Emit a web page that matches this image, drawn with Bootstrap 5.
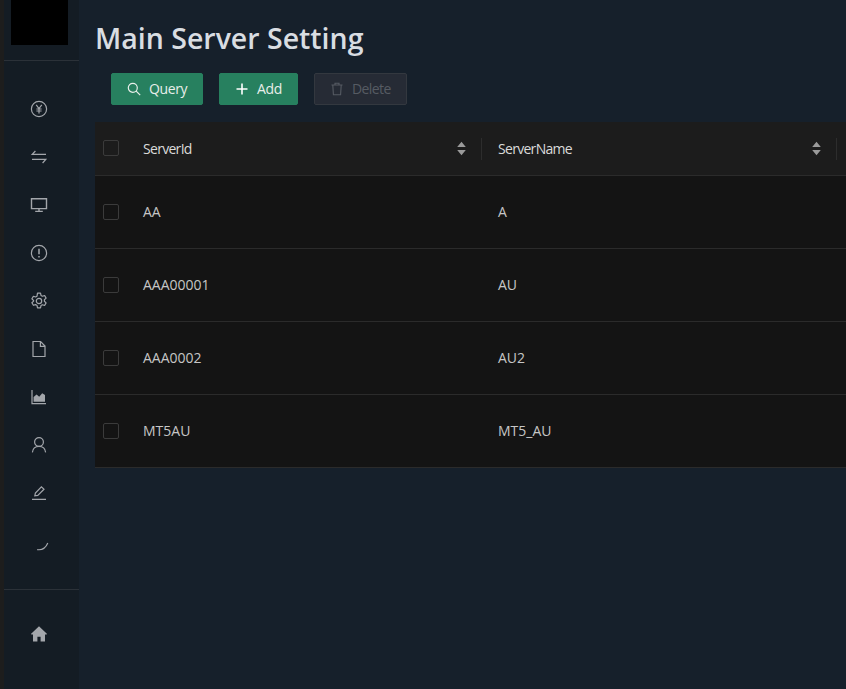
<!DOCTYPE html>
<html lang="en">
<head>
<meta charset="utf-8">
<title>Main Server Setting</title>
<link rel="stylesheet" href="https://cdn.jsdelivr.net/npm/bootstrap@5.3.0/dist/css/bootstrap.min.css">
<style>
html,body{height:100%;margin:0;overflow:hidden;background:#16202b;font-family:"Open Sans","Noto Sans",sans-serif;}
.shell{height:689px;width:846px;overflow:hidden;}
.edge{width:4px;background:#1d1d1d;flex:none;}
.side{width:75px;flex:none;background:#141c24;color:#a3a6ab;}
.logo-wrap{height:61px;border-bottom:1px solid #2b3138;padding:0 0 16px 7px;}
.logo-box{width:57px;height:45px;background:#000;}
.side-list{padding-top:24px;height:529px;border-bottom:1px solid #2b3138;}
.side-item{height:48px;display:flex;align-items:center;justify-content:center;padding-right:5px;}
.side-item svg{width:18px;height:18px;fill:none;stroke:#a3a6ab;stroke-width:1.2;overflow:visible;}
.side-home{height:88px;padding:27px 5px 0 0;display:flex;justify-content:center;}
.side-home svg{width:18px;height:18px;margin-top:9px;fill:#a3a6ab;}
.main-pane{flex:1 1 auto;min-width:0;padding:0 0 0 16px;overflow:hidden;}
.page-title{font-size:28.5px;font-weight:600;color:#d9dde2;line-height:38px;margin:0;padding-top:19px;height:73px;}
.tools{padding-left:16px;gap:16px;height:49px;}
.tool-btn{height:32px;border-radius:2px;font-size:14px;letter-spacing:-.4px;line-height:20px;padding:0 15px;display:inline-flex;align-items:center;gap:8px;border:1px solid #27805f;background:#27805f;color:#e8eeea;}
.tool-btn:hover{background:#27805f;border-color:#27805f;color:#e8eeea;}
.tool-btn.off,.tool-btn:disabled{background:#262b35;border-color:#33383f;color:#565b63;opacity:1;letter-spacing:-.55px;}
.tool-btn svg{width:14px;height:14px;}
.grid-wrap{width:760px;overflow:hidden;}
.srv-grid{width:900px;table-layout:fixed;border-collapse:separate;border-spacing:0;margin:0;font-size:14px;--bs-table-bg:transparent;--bs-table-color:#c6c6c6;}
.srv-grid th,.srv-grid td{border-bottom:1px solid #2b2b2b;padding:0 16px;vertical-align:middle;background:#141414;color:#c6c6c6;font-weight:400;position:relative;}
.srv-grid th{background:#1c1c1c;height:54px;color:#dadada;letter-spacing:-.7px;}
.srv-grid td{height:73px;padding-bottom:2px;}
.srv-grid .chk-col{width:32px;padding:0 8px;}
.srv-grid .data-col{width:355px;}
.tick{display:block;width:16px;height:16px;border:1px solid #3b3b3b;border-radius:2px;background:transparent;}
th .tick{margin-bottom:2px;}
.col-divider::after{content:"";position:absolute;right:0;top:16px;height:22px;width:1px;background:#2d2d2d;}
.sorter{position:absolute;right:16px;top:19px;width:9px;height:15px;}
</style>
</head>
<body>
<div class="shell d-flex">
  <div class="edge"></div>
  <nav class="side d-flex flex-column">
    <div class="logo-wrap"><div class="logo-box"></div></div>
    <div class="side-list">
      <div class="side-item"><svg viewBox="0 0 18 18"><circle cx="9" cy="9" r="7.6"/><path d="M6.200 4.800 9 8.600l2.800-3.800M9 8.600v4.800M6.400 9h5.200M6.400 11h5.200"/></svg></div>
      <div class="side-item"><svg viewBox="0 0 18 18"><path d="M5.400 3 2.200 6.400h13.800M2 11.400h13.800L12.600 15"/></svg></div>
      <div class="side-item"><svg viewBox="0 0 18 18"><path d="M1.500 2.800h15v9.800h-15zM9 12.600v2.600M5.200 15.400h7.600" stroke-width="1.400"/></svg></div>
      <div class="side-item"><svg viewBox="0 0 18 18"><circle cx="9" cy="9" r="7.600"/><path d="M9 4.800v5.400M9 12v1.400" stroke-width="1.500"/></svg></div>
      <div class="side-item"><svg viewBox="0 0 18 18"><path d="M7.500 1.200h3l.5 2.200 1.400.8 2.200-.7 1.500 2.600-1.700 1.600v1.600l1.700 1.600-1.500 2.600-2.200-.7-1.400.8-.5 2.200h-3L7 13.400l-1.400-.8-2.200.7-1.500-2.600 1.700-1.600V8.500L1.900 6.900l1.500-2.600 2.200.7L7 4.200z" stroke-linejoin="round"/><circle cx="9" cy="9" r="2.700"/></svg></div>
      <div class="side-item"><svg viewBox="0 0 18 18"><path d="M3 1.500h7.600L15 6v10.500H3zM10.400 1.500v4.800H15"/></svg></div>
      <div class="side-item"><svg viewBox="0 0 18 18"><path d="M2 2v13.600h14"/><path d="M3.600 13.800V9l3-2.600 2.600 2.400 3-3.600 2.800 1.800v6.800z" fill="#a3a6ab" stroke="none"/></svg></div>
      <div class="side-item"><svg viewBox="0 0 18 18"><circle cx="9" cy="6" r="4.400"/><path d="M2.400 16.400c.4-3.800 3-6 6.600-6s6.200 2.200 6.600 6"/></svg></div>
      <div class="side-item"><svg viewBox="0 0 18 18"><path d="M4.800 11.800 5.400 9 11.400 2.800l2.600 2.400-6.200 6.200zM2 15.400h14"/></svg></div>
      <div class="side-item"><svg viewBox="0 0 18 18"><path d="M7.200 17.600c4 .6 8.400-1.400 10.600-6.600"/></svg></div>
    </div>
    <div class="side-home"><svg viewBox="0 0 18 18"><path d="M9 .3 .9 7.900l.7.7H3v7h4.400v-4.800h3.200v4.800H15v-7h1.400l.7-.7z"/></svg></div>
  </nav>
  <main class="main-pane">
    <h1 class="page-title">Main Server Setting</h1>
    <div class="tools d-flex">
      <button type="button" class="btn tool-btn"><svg viewBox="0 0 14 14" fill="none" stroke="#e8eeea" stroke-width="1.200"><circle cx="5.800" cy="5.800" r="4.500"/><path d="m9.200 9.200 4 4"/></svg>Query</button>
      <button type="button" class="btn tool-btn"><svg viewBox="0 0 14 14" fill="none" stroke="#ffffff" stroke-width="1.600"><path d="M7 1.500v11M1.500 7h11"/></svg>Add</button>
      <button type="button" class="btn tool-btn off" disabled><svg viewBox="0 0 14 14" fill="none" stroke="#565b63" stroke-width="1.100"><path d="M1.500 3h11M5 3V1.300h4V3M2.800 3l.6 9.800h7.200l.6-9.800"/></svg>Delete</button>
    </div>
    <div class="grid-wrap">
      <table class="table srv-grid">
        <thead>
          <tr>
            <th class="chk-col"><span class="tick"></span></th>
            <th class="data-col col-divider">ServerId<svg class="sorter" viewBox="0 0 9 15"><path d="M4.500 .8 8.800 6H.2zM4.500 14.200.2 9h8.600z" fill="#9a9a9a"/></svg></th>
            <th class="data-col col-divider">ServerName<svg class="sorter" viewBox="0 0 9 15"><path d="M4.500 .8 8.800 6H.2zM4.500 14.200.2 9h8.600z" fill="#9a9a9a"/></svg></th>
            <th></th>
          </tr>
        </thead>
        <tbody>
          <tr><td class="chk-col"><span class="tick"></span></td><td>AA</td><td>A</td><td></td></tr>
          <tr><td class="chk-col"><span class="tick"></span></td><td>AAA00001</td><td>AU</td><td></td></tr>
          <tr><td class="chk-col"><span class="tick"></span></td><td>AAA0002</td><td>AU2</td><td></td></tr>
          <tr><td class="chk-col"><span class="tick"></span></td><td>MT5AU</td><td>MT5_AU</td><td></td></tr>
        </tbody>
      </table>
    </div>
  </main>
</div>
<script src="https://cdn.jsdelivr.net/npm/bootstrap@5.3.0/dist/js/bootstrap.bundle.min.js"></script>
</body>
</html>
